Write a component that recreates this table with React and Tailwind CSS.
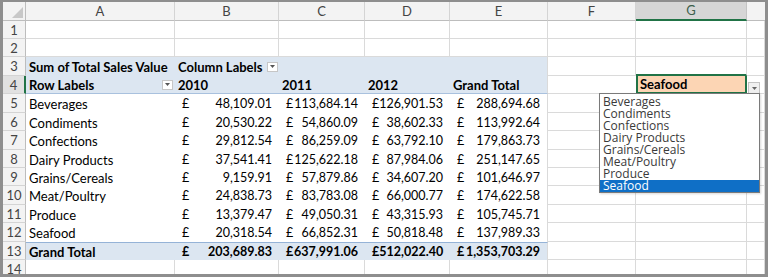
import React from 'react';

const rows = [
  ['Beverages', '48,109.01', '113,684.14', '126,901.53', '288,694.68'],
  ['Condiments', '20,530.22', '54,860.09', '38,602.33', '113,992.64'],
  ['Confections', '29,812.54', '86,259.09', '63,792.10', '179,863.73'],
  ['Dairy Products', '37,541.41', '125,622.18', '87,984.06', '251,147.65'],
  ['Grains/Cereals', '9,159.91', '57,879.86', '34,607.20', '101,646.97'],
  ['Meat/Poultry', '24,838.73', '83,783.08', '66,000.77', '174,622.58'],
  ['Produce', '13,379.47', '49,050.31', '43,315.93', '105,745.71'],
  ['Seafood', '20,318.54', '66,852.31', '50,818.48', '137,989.33'],
];
const total = ['Grand Total', '203,689.83', '637,991.06', '512,022.40', '1,353,703.29'];
const heights = ['h-[18px]', 'h-[18px]', 'h-[19px]', 'h-[18px]', 'h-[19px]', 'h-[18px]', 'h-[19px]', 'h-[18px]', 'h-[18px]', 'h-[19px]', 'h-[18px]', 'h-[19px]', 'h-[18px]', 'h-[18px]'];
const categories = ['Beverages', 'Condiments', 'Confections', 'Dairy Products', 'Grains/Cereals', 'Meat/Poultry', 'Produce', 'Seafood'];

const grid = 'grid grid-cols-[23px_149px_104px_86px_85px_98px_88px_111px_1fr]';

function FilterBtn() {
  return (
    <span className="ml-auto -mt-[2px] w-[11px] h-[10px] border border-[#c6c6c6] bg-white flex items-center justify-center">
      <svg width="5" height="3" viewBox="0 0 5 3"><polygon points="0,0 5,0 2.5,3" fill="#555" /></svg>
    </span>
  );
}

function Money({ v, bold }) {
  return (
    <div className={`h-full flex justify-between items-center pt-[2px] px-[7px] ${bold ? 'font-bold' : ''}`}>
      <span>£</span>
      <span>{v}</span>
    </div>
  );
}

function RowHead({ n, h, active }) {
  return (
    <div className={`${h} flex items-center justify-center pt-[1px] text-[13px] text-[#444] border-b border-[#d4d4d4] ${active ? 'bg-[#e1e1e1] border-r-2 border-r-[#217346]' : 'bg-[#f3f3f3] border-r border-r-[#bdbdbd]'}`}>
      {n}
    </div>
  );
}

const gl = 'border-r border-b border-[#dadada]';
const label = 'flex items-center pt-[2px] pl-[3px] text-[13px]';

function EmptyRow({ n, h }) {
  return (
    <div className={grid}>
      <RowHead n={n} h={h} />
      {[0, 1, 2, 3, 4, 5, 6, 7].map(i => <div key={i} className={`${h} ${gl}`} />)}
    </div>
  );
}

export default function App() {
  return (
    <div className="w-[768px] h-[277px] border-[3px] border-t-2 border-[#8e8e8e] overflow-hidden bg-white relative font-['Lato',sans-serif] text-[12.5px] text-black leading-none">
      {/* column headers */}
      <div className={`${grid} h-[19px] text-[#444] text-[13px]`}>
        <div className="bg-[#f3f3f3] border-r border-b border-[#bdbdbd] flex items-end justify-end pr-[2px] pb-[2px]">
          <svg width="11" height="11" viewBox="0 0 11 11"><polygon points="11,0 11,11 0,11" fill="#c8c8c8" /></svg>
        </div>
        {['A', 'B', 'C', 'D', 'E', 'F'].map(c => (
          <div key={c} className="bg-[#f3f3f3] border-r border-[#d4d4d4] border-b border-b-[#bdbdbd] flex items-center justify-center">{c}</div>
        ))}
        <div className="bg-[#d6d6d6] border-r border-[#c4c4c4] border-b-2 border-b-[#217346] flex items-center justify-center text-[#3d5f4c]">G</div>
        <div className="bg-[#f3f3f3] border-b border-[#bdbdbd]" />
      </div>

      <EmptyRow n={1} h={heights[0]} />
      <EmptyRow n={2} h={heights[1]} />

      {/* row 3 */}
      <div className={grid}>
        <RowHead n={3} h={heights[2]} />
        <div className={`bg-[#dce6f1] font-bold ${label}`}>Sum of Total Sales Value</div>
        <div className={`bg-[#dce6f1] font-bold pr-[1px] ${label}`}>Column Labels<FilterBtn /></div>
        <div className="bg-[#dce6f1]" />
        <div className="bg-[#dce6f1]" />
        <div className="bg-[#dce6f1] border-r border-[#dadada]" />
        <div className={gl} />
        <div className="border-r border-[#dadada] border-b-2 border-b-[#217346]" />
        <div className={gl} />
      </div>

      {/* row 4 */}
      <div className={grid}>
        <RowHead n={4} h={heights[3]} active />
        <div className={`bg-[#dce6f1] border-b border-[#a9c1de] font-bold pr-[2px] ${label}`}>Row Labels<FilterBtn /></div>
        <div className={`bg-[#dce6f1] border-b border-[#a9c1de] font-bold ${label}`}>2010</div>
        <div className={`bg-[#dce6f1] border-b border-[#a9c1de] font-bold ${label}`}>2011</div>
        <div className={`bg-[#dce6f1] border-b border-[#a9c1de] font-bold ${label}`}>2012</div>
        <div className={`bg-[#dce6f1] border-b border-[#a9c1de] border-r border-r-[#dadada] font-bold ${label}`}>Grand Total</div>
        <div className="border-b border-[#dadada]" />
        <div className="bg-[#fcd5b4] border-x-2 border-b-2 border-[#217346] flex items-center pt-[1px] pl-[2px] text-[13px] font-bold">Seafood</div>
        <div className={gl} />
      </div>

      {rows.map((r, i) => (
        <div key={r[0]} className={grid}>
          <RowHead n={i + 5} h={heights[i + 4]} />
          <div className={label}>{r[0]}</div>
          <Money v={r[1]} />
          <Money v={r[2]} />
          <Money v={r[3]} />
          <div className="border-r border-[#dadada]"><Money v={r[4]} /></div>
          <div className={gl} />
          <div className={gl} />
          <div className={gl} />
        </div>
      ))}

      {/* grand total */}
      <div className={grid}>
        <RowHead n={13} h={heights[12]} />
        <div className={`bg-[#dce6f1] border-t border-[#95b3d7] font-bold ${label}`}>{total[0]}</div>
        {[1, 2, 3].map(i => (
          <div key={i} className="bg-[#dce6f1] border-t border-[#95b3d7]"><Money v={total[i]} bold /></div>
        ))}
        <div className="bg-[#dce6f1] border-t border-[#95b3d7] border-r border-r-[#dadada]"><Money v={total[4]} bold /></div>
        <div className={gl} />
        <div className={gl} />
        <div className={gl} />
      </div>

      <EmptyRow n={14} h={heights[13]} />

      {/* data validation dropdown button */}
      <div className="absolute left-[745px] top-[80px] w-[12px] h-[12px] bg-[#f0f0f0] border border-[#c3c3c3] flex items-center justify-center">
        <svg width="5" height="3" viewBox="0 0 5 3"><polygon points="0,0 5,0 2.5,3" fill="#666" /></svg>
      </div>

      {/* data validation list */}
      <div className="absolute left-[596px] top-[91px] w-[161px] bg-white border border-[#7a7a7a] pt-[2px] font-['Open_Sans',sans-serif] text-[12px] text-[#3a3a3a] shadow-[1px_1px_2px_rgba(0,0,0,0.15)]">
        {categories.map(c => (
          <div key={c} className={`h-[12px] flex items-center pl-[3px] ${c === 'Seafood' ? 'bg-[#0f6fc6] text-white' : ''}`}>
            <span className="leading-[12px]">{c}</span>
          </div>
        ))}
      </div>
    </div>
  );
}
